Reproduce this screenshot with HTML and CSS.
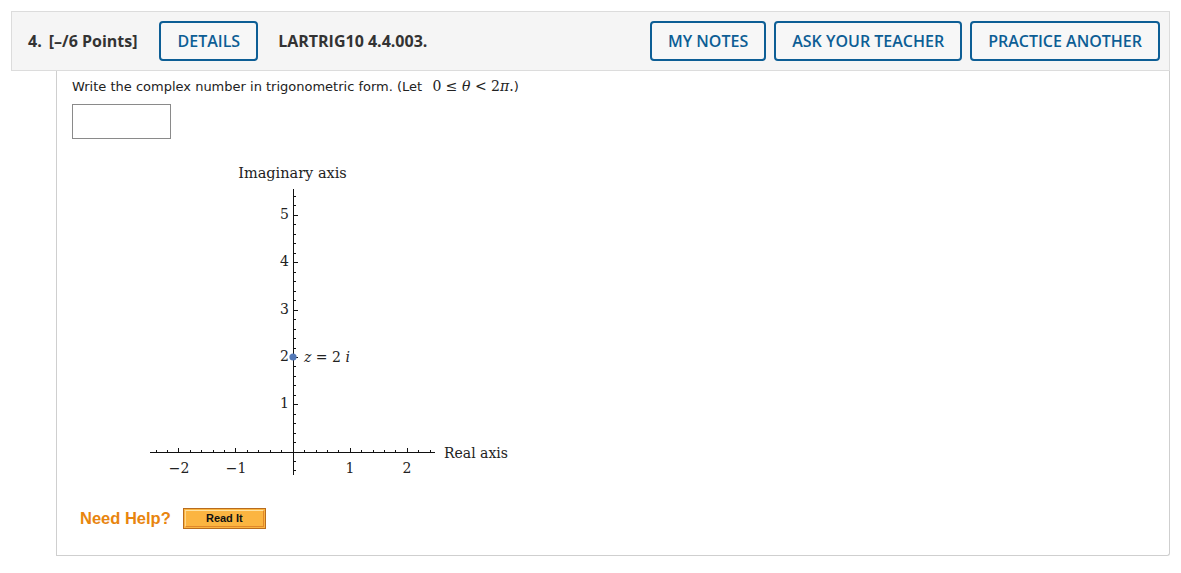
FILE: index.html
```html
<!DOCTYPE html>
<html>
<head>
<meta charset="utf-8">
<link rel="stylesheet" href="styles.css">
</head>
<body>
<div class="question">
  <div class="qhead">
    <div class="qleft">
      <span class="qnum">4.</span>
      <span class="qpts">[–/6 Points]</span>
      <button class="btn">DETAILS</button>
      <span class="qcode">LARTRIG10 4.4.003.</span>
    </div>
    <div class="qright">
      <button class="btn">MY NOTES</button>
      <button class="btn">ASK YOUR TEACHER</button>
      <button class="btn">PRACTICE ANOTHER</button>
    </div>
  </div>
  <div class="qbody">
    <p class="prompt">Write the complex number in trigonometric form. (Let&nbsp; <span class="math">0 ≤ <i>θ</i> &lt; 2<i>π</i>.</span>)</p>
    <div class="answer"></div>
    <svg class="graph" width="380" height="330" viewBox="140 155 380 330" xmlns="http://www.w3.org/2000/svg">
      <g font-family="DejaVu Serif, serif" fill="#222" font-size="14">
        <text x="292.5" y="178" text-anchor="middle" font-size="14.5">Imaginary axis</text>
        <text x="444" y="458" font-size="14">Real axis</text>
        <text x="289" y="219" text-anchor="end">5</text>
        <text x="289" y="266" text-anchor="end">4</text>
        <text x="289" y="314" text-anchor="end">3</text>
        <text x="289" y="361" text-anchor="end">2</text>
        <text x="289" y="408" text-anchor="end">1</text>
        <text x="179" y="473" text-anchor="middle">−2</text>
        <text x="236" y="473" text-anchor="middle">−1</text>
        <text x="350" y="473" text-anchor="middle">1</text>
        <text x="407" y="473" text-anchor="middle">2</text>
        <text x="304" y="362" font-size="14"><tspan font-style="italic">z</tspan> = 2 <tspan font-style="italic">i</tspan></text>
      </g>
      <g stroke="#111" stroke-width="1" shape-rendering="crispEdges">
        <line x1="293.5" y1="189" x2="293.5" y2="475"/>
        <line x1="150" y1="452.5" x2="435" y2="452.5"/>
        <path d="M156,452v-2M167.4,452v-2M178.8,452v-4M190.2,452v-2M201.6,452v-2M213,452v-2M224.4,452v-2M235.8,452v-4M247.2,452v-2M258.6,452v-2M270,452v-2M281.4,452v-2M304.6,452v-2M316,452v-2M327.4,452v-2M338.8,452v-2M350.2,452v-4M361.6,452v-2M373,452v-2M384.4,452v-2M395.8,452v-2M407.2,452v-4M418.6,452v-2M430,452v-2"/>
        <path d="M294,470h2M294,461h2M294,442h2M294,433h2M294,423h2M294,414h2M294,404.5h4M294,395h2M294,385.5h2M294,376h2M294,366.5h2M294,357h4M294,348h2M294,338.5h2M294,329h2M294,319.5h2M294,310h4M294,300.5h2M294,291h2M294,281.5h2M294,272h2M294,262.5h4M294,253h2M294,243.5h2M294,234h2M294,224.5h2M294,215h4M294,205.5h2M294,196h2"/>
      </g>
      <circle cx="293" cy="357" r="3.6" fill="#5479b8"/>
    </svg>
    <div class="help">
      <span class="needhelp">Need Help?</span>
      <button class="readit"><span>Read It</span></button>
    </div>
  </div>
</div>
</body>
</html>
```
FILE: styles.css
```css
html, body {
  margin: 0;
  padding: 0;
  background: #fff;
}
body {
  padding: 11px 11px 0 11px;
  font-family: "Open Sans", "Noto Sans", sans-serif;
}
.question {
  width: 1159px;
}
.qhead {
  box-sizing: border-box;
  height: 60px;
  background: #f5f5f5;
  border: 1px solid #dcdcdc;
  display: flex;
  align-items: center;
  justify-content: space-between;
  padding: 0 9px 0 16px;
}
.qleft, .qright {
  display: flex;
  align-items: center;
}
.qright {
  gap: 8px;
}
.qnum {
  font-weight: 700;
  font-size: 16px;
  color: #333;
  margin-right: 7px;
}
.qpts {
  font-weight: 700;
  font-size: 16px;
  color: #333;
  margin-right: 22px;
}
.qcode {
  font-weight: 700;
  font-size: 16px;
  color: #333;
  margin-left: 20px;
}
.btn {
  box-sizing: border-box;
  height: 40px;
  border: 2px solid #0d5e95;
  border-radius: 4px;
  background: #f7f7f7;
  color: #0d5e95;
  font-family: "Open Sans", "Noto Sans", sans-serif;
  font-weight: 600;
  font-size: 16px;
  padding: 0 16px;
}
.qbody {
  box-sizing: border-box;
  margin-left: 45px;
  border: 1px solid #cfcfcf;
  border-top: none;
  border-bottom-right-radius: 3px;
  height: 485px;
  padding: 7px 15px 0 15px;
}
.prompt {
  margin: 0;
  font-family: "DejaVu Sans", Verdana, sans-serif;
  font-size: 13px;
  color: #222;
  line-height: 17px;
}
.math {
  font-family: "DejaVu Serif", serif;
  font-size: 14px;
  margin-left: 2px;
}
.answer {
  margin-top: 9px;
  width: 99px;
  height: 35px;
  box-sizing: border-box;
  border: 1px solid #8a8a8a;
  background: #fff;
}
.graph {
  display: block;
  margin-left: 68px;
  margin-top: 16px;
}
.help {
  display: flex;
  align-items: center;
  margin-top: 23px;
  padding-left: 8px;
}
.needhelp {
  font-family: "Liberation Sans", Arial, sans-serif;
  font-weight: 700;
  font-size: 16.5px;
  color: #e8850e;
  margin-right: 12px;
}
.readit {
  box-sizing: border-box;
  width: 83px;
  height: 21px;
  padding: 1px;
  border: 1px solid #b86c1e;
  background: #fbb541;
  display: flex;
}
.readit span {
  flex: 1;
  border: 1px solid #e0872a;
  border-top-color: #ffe2a0;
  border-left-color: #ffd68a;
  font-family: "Liberation Sans", Arial, sans-serif;
  font-weight: 700;
  font-size: 11px;
  color: #111;
  line-height: 15px;
  text-align: center;
}
```
